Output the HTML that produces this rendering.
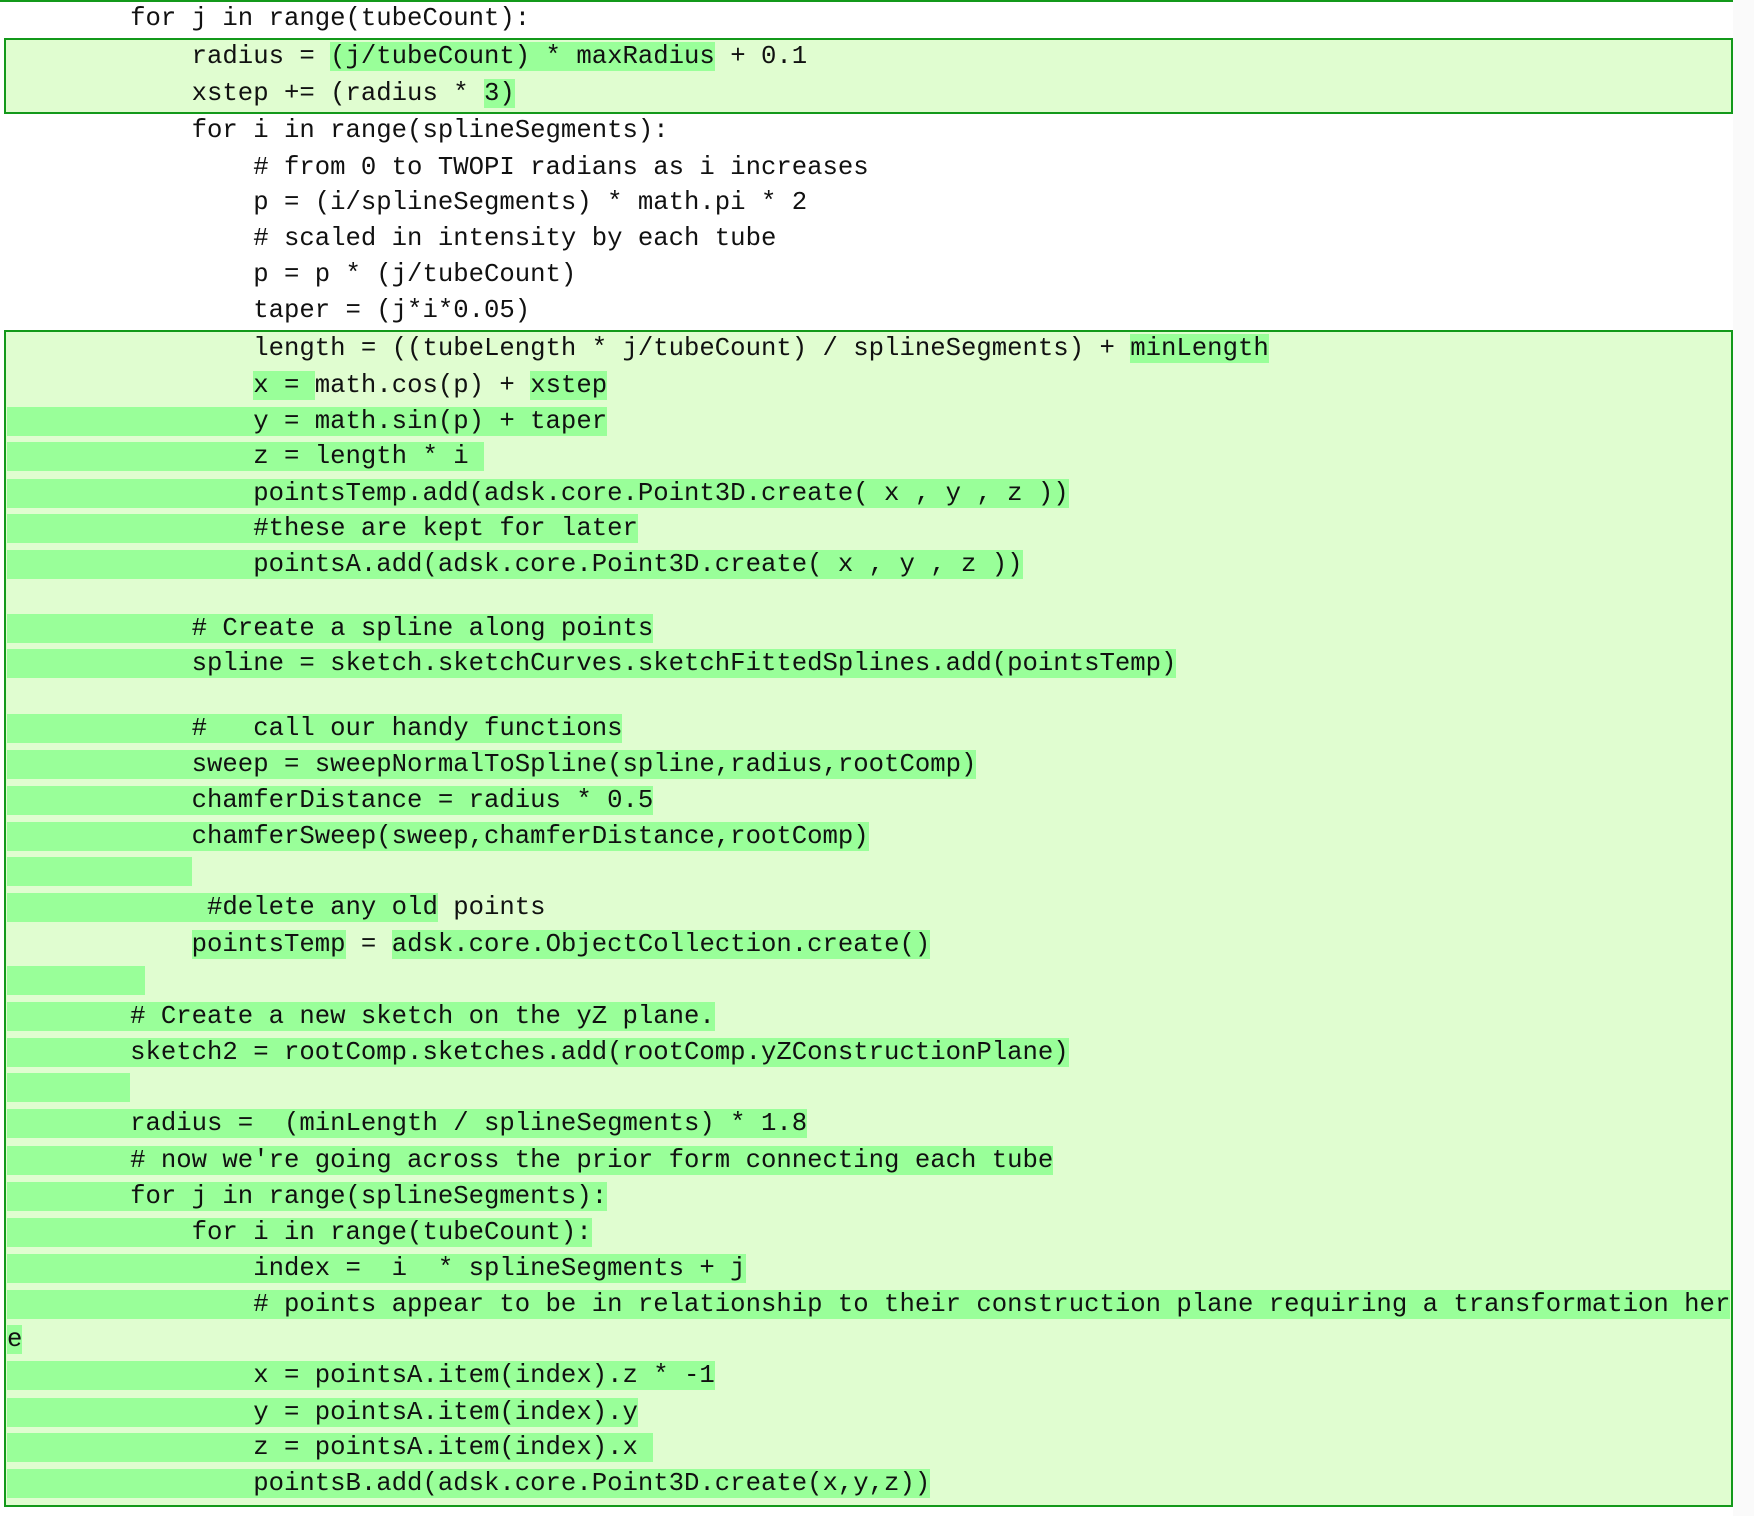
<!DOCTYPE html>
<html><head><meta charset="utf-8">
<style>
html,body{margin:0;padding:0;background:#fff;width:1754px;height:1516px;overflow:hidden;position:relative}
.strip{position:absolute;left:1733px;top:0;width:21px;height:1516px;background:#fafafa}
.topline{position:absolute;left:0;top:0;width:1733px;height:2px;background:#13991a}
.box{position:absolute;background:#e0fdd0;border:2px solid #13991a;box-sizing:border-box}
.l{position:absolute;left:7px;height:36px;line-height:36px;white-space:pre;font-family:"Liberation Mono",monospace;font-size:25.65px;color:#111;margin-top:2px}
.h{background:#99ff99}
</style></head><body>
<div class="strip"></div>
<div class="topline"></div>
<div class="box" style="left:4px;top:38px;width:1729px;height:76px"></div>
<div class="box" style="left:4px;top:330px;width:1729px;height:1177px"></div>

<div class="l" style="top:-1px">        for j in range(tubeCount):</div>
<div class="l" style="top:37px">            radius = <span class="h">(j/tubeCount) * maxRadius</span> + 0.1</div>
<div class="l" style="top:74px">            xstep += (radius * <span class="h">3)</span></div>
<div class="l" style="top:111px">            for i in range(splineSegments):</div>
<div class="l" style="top:148px">                # from 0 to TWOPI radians as i increases</div>
<div class="l" style="top:183px">                p = (i/splineSegments) * math.pi * 2</div>
<div class="l" style="top:219px">                # scaled in intensity by each tube</div>
<div class="l" style="top:255px">                p = p * (j/tubeCount)</div>
<div class="l" style="top:291px">                taper = (j*i*0.05)</div>
<div class="l" style="top:329px">                length = ((tubeLength * j/tubeCount) / splineSegments) + <span class="h">minLength</span></div>
<div class="l" style="top:366px">                <span class="h">x = </span>math.cos(p) + <span class="h">xstep</span></div>
<div class="l" style="top:402px"><span class="h">                y = math.sin(p) + taper</span></div>
<div class="l" style="top:437px"><span class="h">                z = length * i </span></div>
<div class="l" style="top:474px"><span class="h">                pointsTemp.add(adsk.core.Point3D.create( x , y , z ))</span></div>
<div class="l" style="top:509px"><span class="h">                #these are kept for later</span></div>
<div class="l" style="top:545px"><span class="h">                pointsA.add(adsk.core.Point3D.create( x , y , z ))</span></div>
<div class="l" style="top:609px"><span class="h">            # Create a spline along points</span></div>
<div class="l" style="top:644px"><span class="h">            spline = sketch.sketchCurves.sketchFittedSplines.add(pointsTemp)</span></div>
<div class="l" style="top:709px"><span class="h">            #   call our handy functions</span></div>
<div class="l" style="top:745px"><span class="h">            sweep = sweepNormalToSpline(spline,radius,rootComp)</span></div>
<div class="l" style="top:781px"><span class="h">            chamferDistance = radius * 0.5</span></div>
<div class="l" style="top:817px"><span class="h">            chamferSweep(sweep,chamferDistance,rootComp)</span></div>
<div class="l" style="top:852px"><span class="h">            </span></div>
<div class="l" style="top:888px"><span class="h">             #delete any old</span> points</div>
<div class="l" style="top:925px">            <span class="h">pointsTemp</span> = <span class="h">adsk.core.ObjectCollection.create()</span></div>
<div class="l" style="top:961px"><span class="h">         </span></div>
<div class="l" style="top:997px"><span class="h">        # Create a new sketch on the yZ plane.</span></div>
<div class="l" style="top:1033px"><span class="h">        sketch2 = rootComp.sketches.add(rootComp.yZConstructionPlane)</span></div>
<div class="l" style="top:1068px"><span class="h">        </span></div>
<div class="l" style="top:1104px"><span class="h">        radius =  (minLength / splineSegments) * 1.8</span></div>
<div class="l" style="top:1141px"><span class="h">        # now we're going across the prior form connecting each tube</span></div>
<div class="l" style="top:1177px"><span class="h">        for j in range(splineSegments):</span></div>
<div class="l" style="top:1213px"><span class="h">            for i in range(tubeCount):</span></div>
<div class="l" style="top:1249px"><span class="h">                index =  i  * splineSegments + j</span></div>
<div class="l" style="top:1285px"><span class="h">                # points appear to be in relationship to their construction plane requiring a transformation her</span></div>
<div class="l" style="top:1320px"><span class="h">e</span></div>
<div class="l" style="top:1356px"><span class="h">                x = pointsA.item(index).z * -1</span></div>
<div class="l" style="top:1393px"><span class="h">                y = pointsA.item(index).y</span></div>
<div class="l" style="top:1428px"><span class="h">                z = pointsA.item(index).x </span></div>
<div class="l" style="top:1464px"><span class="h">                pointsB.add(adsk.core.Point3D.create(x,y,z))</span></div>
</body></html>
